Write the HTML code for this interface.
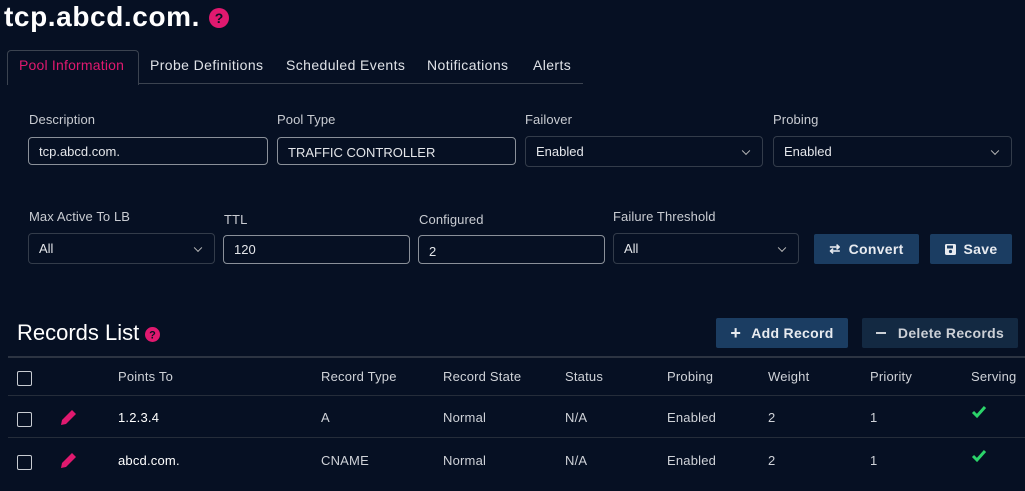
<!DOCTYPE html>
<html><head><meta charset="utf-8"><style>
*{box-sizing:border-box;margin:0;padding:0}
body{width:1025px;height:491px;background:#061023;font-family:"Liberation Sans",sans-serif;color:#d3d6dc;position:relative;overflow:hidden}
.a{position:absolute;white-space:nowrap}
.lbl{font-size:13px;color:#c9ccd2;letter-spacing:0.1px}
.inp{position:absolute;border:1px solid #8a9099;border-radius:4px;font-size:13px;color:#e4e6ea;padding-left:10px;display:flex;align-items:center}
.sel{position:absolute;border:1px solid #333c4a;border-radius:4px;font-size:13px;color:#e4e6ea;padding-left:10px;display:flex;align-items:center}
.sel:after{content:"";position:absolute;right:13px;top:50%;width:5px;height:5px;border-right:1.3px solid #bbb;border-bottom:1.3px solid #bbb;transform:translateY(-70%) rotate(45deg)}
.btn{position:absolute;background:#1b3d62;border-radius:2px;color:#e8ebf0;font-weight:bold;font-size:14px;letter-spacing:0.3px;display:flex;align-items:center;justify-content:center;gap:8px}
.tab{position:absolute;top:57px;font-size:14px;color:#dfe2e7;letter-spacing:0.4px}
.hl{position:absolute;left:8px;right:0;height:1px;background:#252d3a}
.cb{position:absolute;left:17px;width:15px;height:15px;border:1.5px solid #c8ccd2;border-radius:2px}
.t{position:absolute;font-size:13px;color:#cfd2d8;white-space:nowrap;letter-spacing:0.2px}
</style></head><body>
<div class="a" style="left:4px;top:1px;font-size:28px;font-weight:bold;color:#fff;letter-spacing:0.6px">tcp.abcd.com.</div>
<svg class="a" style="left:209px;top:8px" width="20" height="20"><circle cx="10" cy="10" r="10" fill="#e0196f"/><text x="10" y="15" font-size="14" font-weight="bold" fill="#061023" text-anchor="middle" font-family="Liberation Sans">?</text></svg>

<div class="a" style="left:7px;top:83px;width:576px;height:1px;background:#3b4350"></div>
<div class="a" style="left:7px;top:50px;width:132px;height:35px;border:1px solid #3b4350;border-bottom:none;border-radius:4px 4px 0 0;background:#061023"></div>
<div class="tab" style="left:19px;color:#e0196f;letter-spacing:0.2px">Pool Information</div>
<div class="tab" style="left:150px">Probe Definitions</div>
<div class="tab" style="left:286px">Scheduled Events</div>
<div class="tab" style="left:427px">Notifications</div>
<div class="tab" style="left:533px">Alerts</div>

<div class="a lbl" style="left:29px;top:112px">Description</div>
<div class="a lbl" style="left:277px;top:112px">Pool Type</div>
<div class="a lbl" style="left:525px;top:112px">Failover</div>
<div class="a lbl" style="left:773px;top:112px">Probing</div>
<div class="inp" style="left:28px;top:137px;width:240px;height:28px">tcp.abcd.com.</div>
<div class="inp" style="left:277px;top:137px;width:239px;height:28px;padding-top:3px">TRAFFIC CONTROLLER</div>
<div class="sel" style="left:525px;top:136px;width:238px;height:31px">Enabled</div>
<div class="sel" style="left:773px;top:136px;width:239px;height:31px">Enabled</div>

<div class="a lbl" style="left:29px;top:209px">Max Active To LB</div>
<div class="a lbl" style="left:224px;top:212px">TTL</div>
<div class="a lbl" style="left:419px;top:212px">Configured</div>
<div class="a lbl" style="left:613px;top:209px">Failure Threshold</div>
<div class="sel" style="left:28px;top:233px;width:187px;height:31px">All</div>
<div class="inp" style="left:223px;top:235px;width:187px;height:29px">120</div>
<div class="inp" style="left:418px;top:235px;width:187px;height:29px;padding-top:4px">2</div>
<div class="sel" style="left:613px;top:233px;width:186px;height:31px">All</div>
<div class="btn" style="left:814px;top:234px;width:105px;height:30px"><span style="font-size:13px">⇄</span>Convert</div>
<div class="btn" style="left:930px;top:234px;width:82px;height:30px"><svg width="11" height="11"><rect x="0" y="0" width="11" height="11" rx="1.5" fill="#e8ebf0"/><rect x="2" y="1.5" width="6" height="3" fill="#1b3d62"/><circle cx="5.5" cy="7.5" r="1.6" fill="#1b3d62"/></svg>Save</div>

<div class="a" style="left:17px;top:320px;font-size:22px;color:#fff">Records List</div>
<svg class="a" style="left:145px;top:327px" width="15" height="15"><circle cx="7.5" cy="7.5" r="7.5" fill="#e0196f"/><text x="7.5" y="11.5" font-size="11" font-weight="bold" fill="#061023" text-anchor="middle" font-family="Liberation Sans">?</text></svg>
<div class="btn" style="left:716px;top:318px;width:132px;height:30px;gap:10px"><span style="font-size:18px;line-height:1">+</span>Add Record</div>
<div class="btn" style="left:862px;top:318px;width:156px;height:30px;background:#132942;color:#ccd0d6;gap:12px"><span style="display:inline-block;width:10px;height:2.5px;background:#ccd0d6"></span>Delete Records</div>

<div class="hl" style="top:356px;background:#2c3442;height:2px"></div>
<div class="hl" style="top:395px"></div>
<div class="hl" style="top:437px"></div>

<div class="cb" style="top:371px"></div>
<div class="cb" style="top:412px"></div>
<div class="cb" style="top:455px"></div>

<div class="t" style="left:118px;top:369px">Points To</div>
<div class="t" style="left:321px;top:369px">Record Type</div>
<div class="t" style="left:443px;top:369px">Record State</div>
<div class="t" style="left:565px;top:369px">Status</div>
<div class="t" style="left:667px;top:369px">Probing</div>
<div class="t" style="left:768px;top:369px">Weight</div>
<div class="t" style="left:870px;top:369px">Priority</div>
<div class="t" style="left:971px;top:369px">Serving</div>

<svg class="a" style="left:60px;top:408px" width="18" height="18"><path d="M1 17 L2 12 L12 2 L16 6 L6 16 Z" fill="#e0196f"/></svg>
<svg class="a" style="left:60px;top:451px" width="18" height="18"><path d="M1 17 L2 12 L12 2 L16 6 L6 16 Z" fill="#e0196f"/></svg>

<div class="t" style="left:118px;top:410px;color:#fff">1.2.3.4</div>
<div class="t" style="left:321px;top:410px">A</div>
<div class="t" style="left:443px;top:410px">Normal</div>
<div class="t" style="left:565px;top:410px">N/A</div>
<div class="t" style="left:667px;top:410px">Enabled</div>
<div class="t" style="left:768px;top:410px">2</div>
<div class="t" style="left:870px;top:410px">1</div>
<svg class="a" style="left:971px;top:405px" width="16" height="14"><path d="M2 7 L6 11 L14 2" stroke="#2bd46a" stroke-width="3" fill="none"/></svg>

<div class="t" style="left:118px;top:453px;color:#fff">abcd.com.</div>
<div class="t" style="left:321px;top:453px">CNAME</div>
<div class="t" style="left:443px;top:453px">Normal</div>
<div class="t" style="left:565px;top:453px">N/A</div>
<div class="t" style="left:667px;top:453px">Enabled</div>
<div class="t" style="left:768px;top:453px">2</div>
<div class="t" style="left:870px;top:453px">1</div>
<svg class="a" style="left:971px;top:449px" width="16" height="14"><path d="M2 7 L6 11 L14 2" stroke="#2bd46a" stroke-width="3" fill="none"/></svg>
</body></html>
